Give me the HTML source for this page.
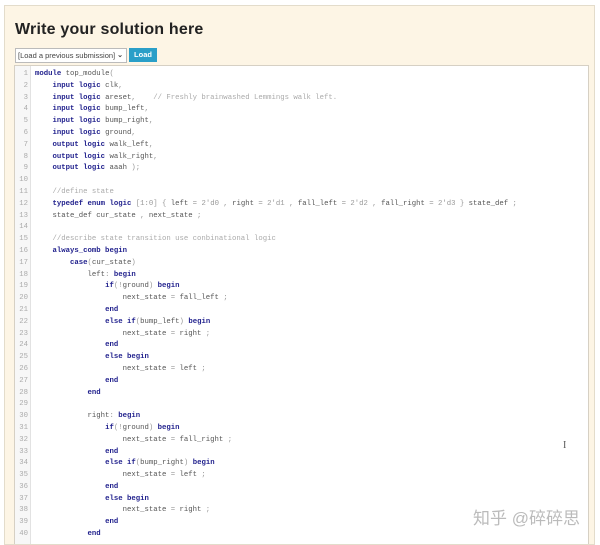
<!DOCTYPE html>
<html><head><meta charset="utf-8"><style>
html,body{margin:0;width:600px;height:540px;overflow:hidden;background:#fff;font-family:"Liberation Sans",sans-serif}
.panel{position:absolute;left:4px;top:5px;width:591px;height:540px;background:#fdf5e5;border:1px solid #e3dccb;box-sizing:border-box;overflow:hidden}
h1{position:absolute;left:10px;top:15px;margin:0;font-size:16px;font-weight:bold;color:#222;letter-spacing:0.2px}
.sel{position:absolute;left:10px;top:42px;width:108px;height:13px;border:1px solid #bbb;background:#fff;font-size:7.5px;color:#444;line-height:13px;padding-left:2px;box-sizing:content-box}
.sel b{position:absolute;right:3px;top:0;font-size:7px}
.btn{position:absolute;left:124px;top:42px;width:28px;height:14px;background:#2a9fc8;color:#fff;font-size:7.5px;font-weight:bold;text-align:center;line-height:14px}
.ed{position:absolute;left:9px;top:59px;width:573px;height:490px;background:#fff;border:1px solid #d6d0c4}
.gut{position:absolute;left:0;top:0;width:15px;height:100%;background:#f7f7f7;border-right:1px solid #e2e2e2}
pre{margin:0;position:absolute;top:3px;font-family:"Liberation Mono",monospace;font-size:7.3px;line-height:11.8px;color:#555}
.ln{left:0;width:13px;text-align:right;color:#aaa}
.code{left:20px}
.k{color:#1f1f8c;font-weight:bold}
.c{color:#aaa}
.p{color:#999}
.wm{position:absolute;left:473px;top:504px;font-family:"Liberation Sans","Noto Sans CJK SC",sans-serif;font-size:17px;color:#bbb}
.cur{position:absolute;left:563px;top:440px;font-size:10px;color:#555;font-family:"Liberation Serif",serif}
</style></head><body>
<div class="panel">
<h1>Write your solution here</h1>
<div class="sel">[Load a previous submission]<b>⌄</b></div>
<div class="btn">Load</div>
<div class="ed"><div class="gut"></div>
<pre class="ln">1
2
3
4
5
6
7
8
9
10
11
12
13
14
15
16
17
18
19
20
21
22
23
24
25
26
27
28
29
30
31
32
33
34
35
36
37
38
39
40</pre>
<pre class="code"><span class="k">module</span> top_module<span class="p">(</span>
    <span class="k">input logic</span> clk<span class="p">,</span>
    <span class="k">input logic</span> areset<span class="p">,</span>    <span class="c">// Freshly brainwashed Lemmings walk left.</span>
    <span class="k">input logic</span> bump_left<span class="p">,</span>
    <span class="k">input logic</span> bump_right<span class="p">,</span>
    <span class="k">input logic</span> ground<span class="p">,</span>
    <span class="k">output logic</span> walk_left<span class="p">,</span>
    <span class="k">output logic</span> walk_right<span class="p">,</span>
    <span class="k">output logic</span> aaah <span class="p">);</span>

    <span class="c">//define state</span>
    <span class="k">typedef enum logic</span> <span class="p">[1:0] {</span> left <span class="p">=</span> <span class="p">2'd0 ,</span> right <span class="p">=</span> <span class="p">2'd1 ,</span> fall_left <span class="p">=</span> <span class="p">2'd2 ,</span> fall_right <span class="p">=</span> <span class="p">2'd3 }</span> state_def <span class="p">;</span>
    state_def cur_state <span class="p">,</span> next_state <span class="p">;</span>

    <span class="c">//describe state transition use conbinational logic</span>
    <span class="k">always_comb begin</span>
        <span class="k">case</span><span class="p">(</span>cur_state<span class="p">)</span>
            left<span class="p">:</span> <span class="k">begin</span>
                <span class="k">if</span><span class="p">(!</span>ground<span class="p">)</span> <span class="k">begin</span>
                    next_state <span class="p">=</span> fall_left <span class="p">;</span>
                <span class="k">end</span>
                <span class="k">else if</span><span class="p">(</span>bump_left<span class="p">)</span> <span class="k">begin</span>
                    next_state <span class="p">=</span> right <span class="p">;</span>
                <span class="k">end</span>
                <span class="k">else begin</span>
                    next_state <span class="p">=</span> left <span class="p">;</span>
                <span class="k">end</span>
            <span class="k">end</span>

            right<span class="p">:</span> <span class="k">begin</span>
                <span class="k">if</span><span class="p">(!</span>ground<span class="p">)</span> <span class="k">begin</span>
                    next_state <span class="p">=</span> fall_right <span class="p">;</span>
                <span class="k">end</span>
                <span class="k">else if</span><span class="p">(</span>bump_right<span class="p">)</span> <span class="k">begin</span>
                    next_state <span class="p">=</span> left <span class="p">;</span>
                <span class="k">end</span>
                <span class="k">else begin</span>
                    next_state <span class="p">=</span> right <span class="p">;</span>
                <span class="k">end</span>
            <span class="k">end</span></pre>
</div>
</div>
<div class="cur">I</div>
<div class="wm">知乎 @碎碎思</div>
</body></html>
